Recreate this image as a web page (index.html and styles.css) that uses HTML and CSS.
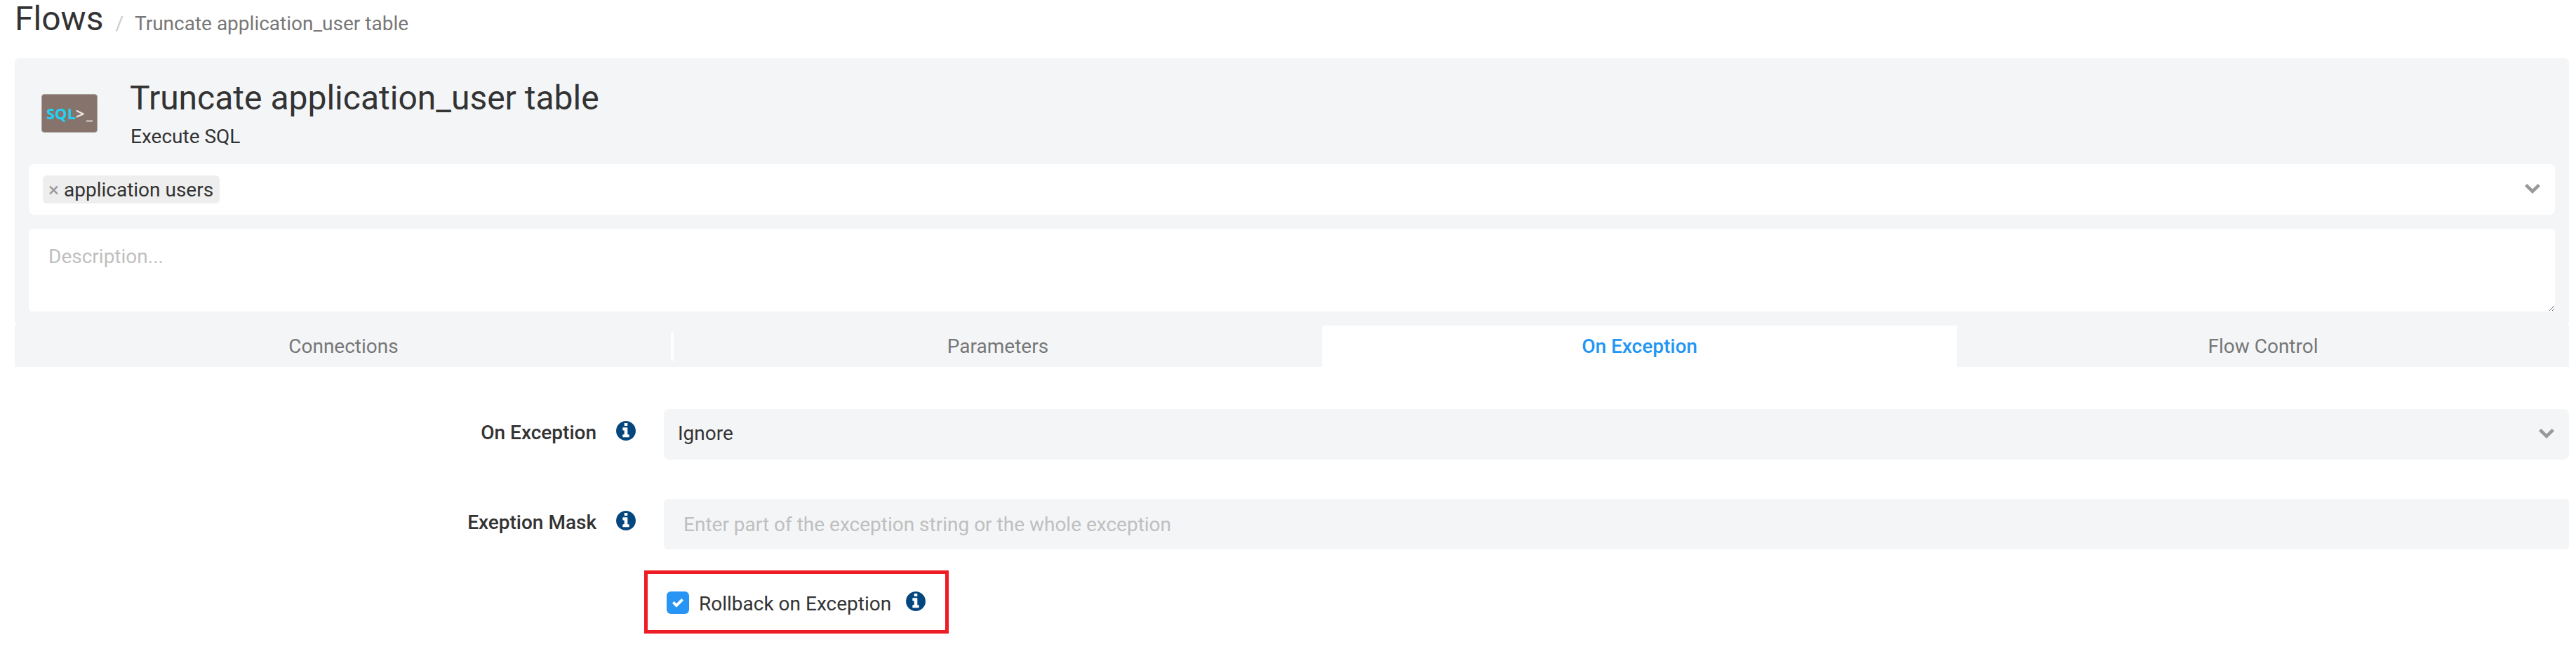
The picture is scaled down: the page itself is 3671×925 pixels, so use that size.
FILE: index.html
```html
<!DOCTYPE html>
<html lang="en">
<head>
    <meta charset="UTF-8">
    <meta name="viewport" content="width=device-width, initial-scale=1.0">
    <title>Flows</title>
    <link rel="stylesheet" href="styles.css">
</head>
<body>
    <svg class="sprite" xmlns="http://www.w3.org/2000/svg">
        <symbol id="info" viewBox="128 128 1536 1536">
            <path d="M1152 1376v-160q0-14-9-23t-23-9h-96v-512q0-14-9-23t-23-9h-320q-14 0-23 9t-9 23v160q0 14 9 23t23 9h96v320h-96q-14 0-23 9t-9 23v160q0 14 9 23t23 9h448q14 0 23-9t9-23zm-128-896v-160q0-14-9-23t-23-9h-192q-14 0-23 9t-9 23v160q0 14 9 23t23 9h192q14 0 23-9t9-23zm640 416q0 209-103 385.5t-279.5 279.5-385.5 103-385.5-103-279.5-279.5-103-385.5 103-385.5 279.5-279.5 385.5-103 385.5 103 279.5 279.5 103 385.5z"/>
        </symbol>
        <symbol id="chevron" viewBox="0 0 22 14">
            <path d="M0 3.3L3.3 0 11 7.4 18.7 0 22 3.3 11 14z"/>
        </symbol>
        <symbol id="check" viewBox="0 0 16 13">
            <path d="M0 6.8L2.8 4 6 7.2 13.2 0 16 2.8 6 12.8z"/>
        </symbol>
    </svg>

    <nav class="breadcrumb">
        <h1>Flows</h1>
        <span class="separator">/</span>
        <span class="current">Truncate application_user table</span>
    </nav>

    <section class="panel">
        <header class="flow-header">
            <div class="sql-icon"><b>SQL</b><span class="prompt">&gt;</span><span class="cursor"></span></div>
            <div>
                <h2>Truncate application_user table</h2>
                <p class="flow-type">Execute SQL</p>
            </div>
        </header>
        <div class="tag-select">
            <span class="tag"><span class="remove">×</span>application users</span>
            <svg class="chevron"><use href="#chevron"/></svg>
        </div>
        <textarea class="description" placeholder="Description..."></textarea>
    </section>

    <ul class="tabs">
        <li class="divided">Connections</li>
        <li>Parameters</li>
        <li class="active">On Exception</li>
        <li>Flow Control</li>
    </ul>

    <form class="exception-form">
        <div class="form-row">
            <label>On Exception</label>
            <svg class="info"><use href="#info"/></svg>
            <div class="select">Ignore<svg class="chevron"><use href="#chevron"/></svg></div>
        </div>
        <div class="form-row">
            <label for="mask">Exeption Mask</label>
            <svg class="info"><use href="#info"/></svg>
            <input type="text" id="mask" class="mask" placeholder="Enter part of the exception string or the whole exception">
        </div>
        <div class="rollback">
            <span class="checkbox"><svg><use href="#check"/></svg></span>
            <span class="rollback-text">Rollback on Exception</span>
            <svg class="info"><use href="#info"/></svg>
        </div>
    </form>
</body>
</html>
```
FILE: styles.css
```css
* {
    box-sizing: border-box;
}

body {
    font-family: Roboto, Arial, sans-serif;
    font-size: 28px;
    line-height: 40px;
    color: #333;
    background-color: #fff;
    margin: 0;
    padding: 0 10px 0 21px;
    overflow: hidden;
}

h1, h2, p, ul {
    margin: 0;
    padding: 0;
}

h1, h2 {
    font-size: 48px;
    font-weight: 400;
    line-height: 56px;
}

.sprite {
    display: none;
}

/* Breadcrumb */
.breadcrumb {
    display: flex;
    align-items: baseline;
    height: 83px;
}

.breadcrumb h1 {
    margin-top: -1px;
}

.separator {
    color: #ccc;
    margin: 0 16px 0 17px;
}

.current {
    color: #777;
}

/* Flow panel */
.panel {
    background-color: #f3f5f7;
    border-radius: 6px;
    height: 381px;
    padding: 28px 20px 20px;
}

.flow-header {
    display: flex;
    height: 123px;
    padding-left: 18px;
}

.flow-header h2 {
    padding-top: 1px;
}

.sql-icon {
    display: flex;
    align-items: center;
    width: 80px;
    height: 55px;
    margin: 23px 46px 0 0;
    padding-left: 6px;
    border: 1px solid #a8a09e;
    border-radius: 4px;
    background-color: #85736c;
    font-family: "Open Sans", sans-serif;
    font-size: 22px;
    line-height: 53px;
    color: #e8e4e2;
}

.sql-icon b {
    color: #1fd3f5;
}

.prompt {
    font-weight: 700;
}

.cursor {
    width: 9px;
    height: 3px;
    margin: 22px 0 0 2px;
    background-color: #bab2ae;
}

.flow-type {
    margin-top: 7px;
    padding-left: 1px;
}

.tag-select {
    display: flex;
    align-items: center;
    justify-content: space-between;
    height: 72px;
    padding: 0 21px 0 20px;
    border-radius: 8px;
    background-color: #fff;
}

.tag {
    display: flex;
    height: 40px;
    padding: 1px 9px 0 8px;
    border-radius: 6px;
    background-color: #eee;
}

.remove {
    color: #999;
    margin-right: 7px;
}

.chevron {
    width: 22px;
    height: 14px;
    fill: #999;
}

.tag-select .chevron {
    margin-bottom: 2px;
}

.description {
    display: block;
    width: 100%;
    height: 118px;
    margin-top: 20px;
    padding: 20px 28px;
    border: none;
    border-radius: 6px;
    background-color: #fff;
    font: inherit;
}

::placeholder {
    color: #bfbfbf;
}

/* Tabs */
.tabs {
    display: grid;
    grid-template-columns: 939fr 924fr 905fr 872fr;
    height: 59px;
    list-style: none;
    text-align: center;
    line-height: 60px;
    color: #777;
    background-color: #f3f5f7;
}

.divided {
    padding-right: 2px;
    background: linear-gradient(#fff, #fff) no-repeat right 0 top 10px / 4px 40px;
}

.active {
    background-color: #fff;
    color: #2196f3;
    font-weight: 500;
}

/* Form */
.exception-form {
    padding-top: 60px;
}

.form-row {
    display: flex;
    height: 72px;
    margin-bottom: 56px;
}

.form-row label {
    width: 829px;
    padding-top: 14px;
    text-align: right;
    font-weight: 500;
}

.info {
    width: 28px;
    height: 28px;
    fill: #04467e;
}

.form-row .info {
    margin: 17px 40px 0 28px;
}

.select, .mask {
    flex: 1;
    height: 72px;
    border: none;
    border-radius: 8px;
    background-color: #f3f5f7;
}

.select {
    display: flex;
    align-items: center;
    justify-content: space-between;
    padding: 0 21px 2px 20px;
}

.mask {
    padding: 0 28px;
    border-radius: 6px;
    font: inherit;
}

.rollback {
    display: flex;
    width: 434px;
    height: 90px;
    margin: -26px 0 0 897px;
    padding: 25px 0 0 27px;
    border: 5px solid #ee1c24;
}

.checkbox {
    display: flex;
    align-items: center;
    justify-content: center;
    width: 32px;
    height: 32px;
    border-radius: 6px;
    background-color: #2895f4;
}

.checkbox svg {
    width: 16px;
    height: 13px;
    fill: #fff;
}

.rollback-text {
    width: 294px;
    padding-left: 14px;
    margin: -2px 15px 0 0;
    white-space: nowrap;
}
```
